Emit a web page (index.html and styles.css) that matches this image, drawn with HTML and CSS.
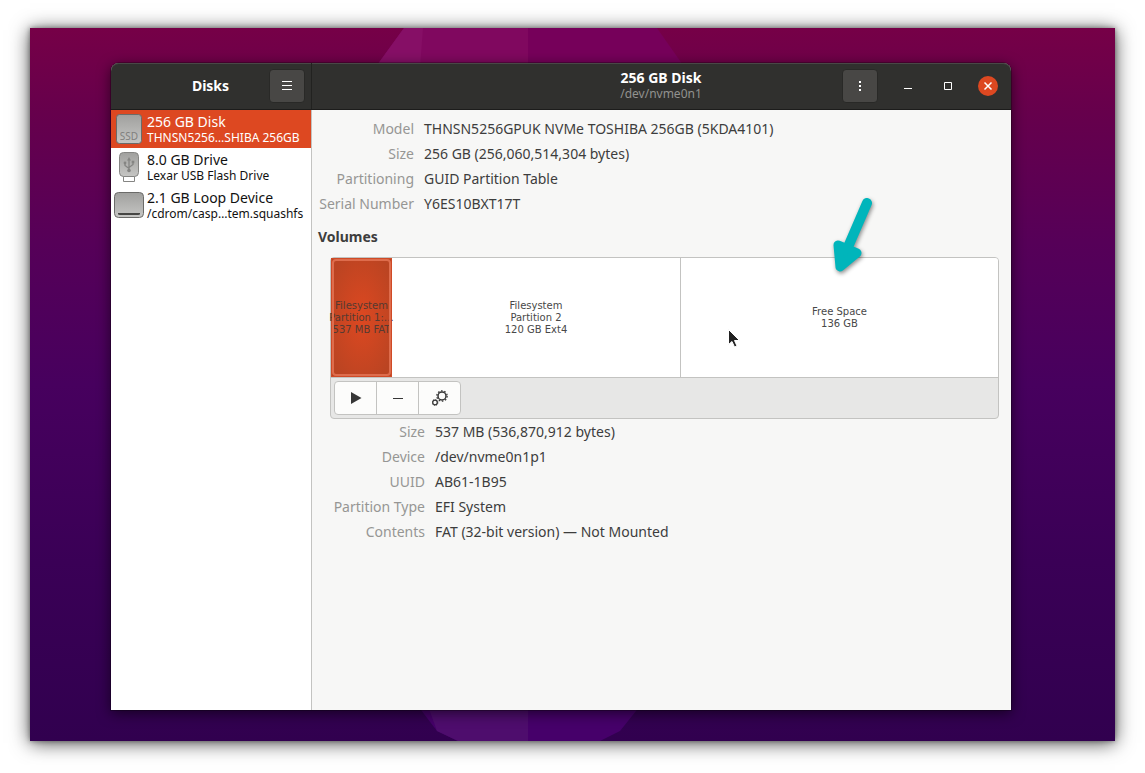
FILE: index.html
```html
<!DOCTYPE html>
<html lang="en">
<head>
<meta charset="utf-8">
<title>Disks</title>
<link rel="stylesheet" href="styles.css">
</head>
<body>
<div class="desktop">
  <svg class="wallpaper" viewBox="0 0 1085 713" preserveAspectRatio="none" aria-hidden="true">
    <defs>
      <linearGradient id="sky" x1="0" y1="0" x2="0" y2="1">
        <stop offset="0" stop-color="#760047"/>
        <stop offset="0.12" stop-color="#66004c"/>
        <stop offset="0.3" stop-color="#560058"/>
        <stop offset="0.5" stop-color="#47005e"/>
        <stop offset="0.75" stop-color="#3a0056"/>
        <stop offset="1" stop-color="#31004f"/>
      </linearGradient>
    </defs>
    <rect width="1085" height="713" fill="url(#sky)"/>
    <path d="M374 0H627L655 40H345Z" fill="#76005a"/>
    <path d="M374 0H498V40H345Z" fill="#80085f"/>
    <path d="M374 0H393L390 40H345Z" fill="#860f66"/>
    <path d="M388 678H610L590 703L570 713H428L407 703Z" fill="#46006a"/>
    <path d="M398 678H498V713H428L407 703Z" fill="#4e0d6d"/>
  </svg>
  <main class="window">
    <header class="titlebar">
      <div class="title-left">
        <h1 class="app-name">Disks</h1>
        <button class="bar-button" aria-label="Main menu">
          <svg width="16" height="16" viewBox="0 0 16 16"><path d="M3 3.5H13M3 7.5H13M3 11.5H13" stroke="#fff"/></svg>
        </button>
      </div>
      <div class="title-right">
        <div class="heading">
          <h2 class="disk-name">256 GB Disk</h2>
          <p class="disk-path">/dev/nvme0n1</p>
        </div>
        <div class="controls">
          <button class="bar-button" aria-label="Drive options">
            <svg width="16" height="16" viewBox="0 0 16 16"><path d="M7 3h2v2H7zM7 7h2v2H7zM7 11h2v2H7z" fill="#fff"/></svg>
          </button>
          <button class="win-button" aria-label="Minimize">
            <svg width="20" height="20" viewBox="0 0 20 20"><path d="M6 12.5H14" stroke="#fff"/></svg>
          </button>
          <button class="win-button" aria-label="Maximize">
            <svg width="20" height="20" viewBox="0 0 20 20"><path d="M6.5 6.5h7v7h-7z" fill="none" stroke="#fff"/></svg>
          </button>
          <button class="win-button close" aria-label="Close">
            <svg width="20" height="20" viewBox="0 0 20 20"><path d="M6.5 6.5L13.5 13.5M13.5 6.5L6.5 13.5" stroke="#fff" stroke-width="1.5"/></svg>
          </button>
        </div>
      </div>
    </header>
    <div class="body">
      <nav class="sidebar" aria-label="Drives">
        <button class="drive selected">
          <svg class="drive-icon" width="32" height="32" viewBox="0 0 32 32">
            <defs><linearGradient id="metal" x1="0" y1="0" x2="0" y2="1"><stop offset="0" stop-color="#a0a09e"/><stop offset="1" stop-color="#c6c6c4"/></linearGradient></defs>
            <rect x="3.5" y="1.5" width="25" height="29" rx="3" fill="url(#metal)" stroke="#6b6b69"/>
            <text class="ssd-text" x="16" y="27" text-anchor="middle">SSD</text>
          </svg>
          <span class="drive-text"><span class="drive-name">256 GB Disk</span><span class="drive-model">THNSN5256…SHIBA 256GB</span></span>
        </button>
        <button class="drive">
          <svg class="drive-icon" width="32" height="32" viewBox="0 0 32 32">
            <path d="M10.5 25.5h11v5h-11z" fill="#fff" stroke="#858583"/>
            <rect x="6.5" y="1.5" width="19" height="24" rx="4" fill="url(#metal)" stroke="#858583"/>
            <path d="M16 8V19M12 12V14.500L16 17.500M20 11V13.500L16 16.500" fill="none" stroke="#858583" stroke-width="1.3"/>
            <path d="M14 9.500L16 6L18 9.500Z" fill="#858583"/>
            <circle cx="16" cy="19.500" r="1.800" fill="#858583"/><circle cx="12" cy="12" r="1.400" fill="#858583"/><path d="M18.700 9.700h2.600v2.600h-2.600z" fill="#858583"/>
          </svg>
          <span class="drive-text"><span class="drive-name">8.0 GB Drive</span><span class="drive-model">Lexar USB Flash Drive</span></span>
        </button>
        <button class="drive">
          <svg class="drive-icon" width="32" height="32" viewBox="0 0 32 32">
            <rect x="1.5" y="3.5" width="29" height="25" rx="4" fill="url(#metal)" stroke="#6b6b69"/>
            <path d="M5 24h22v1q0 1-2 1H7q-2 0-2-1Z" fill="#464644"/>
          </svg>
          <span class="drive-text"><span class="drive-name">2.1 GB Loop Device</span><span class="drive-model">/cdrom/casp…tem.squashfs</span></span>
        </button>
      </nav>
      <section class="content">
        <dl class="details">
          <dt>Model</dt><dd>THNSN5256GPUK NVMe TOSHIBA 256GB (5KDA4101)</dd>
          <dt>Size</dt><dd>256 GB (256,060,514,304 bytes)</dd>
          <dt>Partitioning</dt><dd>GUID Partition Table</dd>
          <dt>Serial Number</dt><dd>Y6ES10BXT17T</dd>
        </dl>
        <h3 class="section-title">Volumes</h3>
        <div class="volumes">
          <div class="partitions">
            <button class="partition efi active"><span>Filesystem<br>Partition 1:…<br>537 MB FAT</span></button>
            <button class="partition root"><span>Filesystem<br>Partition 2<br>120 GB Ext4</span></button>
            <button class="partition free"><span>Free Space<br>136 GB</span></button>
            <svg class="pointer" width="14" height="22" viewBox="0 0 14 22" aria-hidden="true"><path d="M1.5 1.5V16.5L5 13.5L7.500 19L10 18L7.500 12.500H12.500Z" fill="#222" stroke="#fff"/></svg>
            <svg class="arrow" width="48" height="84" viewBox="0 0 48 84" aria-hidden="true"><path d="M37 10L18 54" stroke="#00b5bb" stroke-width="10" stroke-linecap="round"/><path d="M8 52L27 60L10 74Z" fill="#00b5bb" stroke="#00b5bb" stroke-width="9" stroke-linejoin="round"/></svg>
          </div>
          <div class="toolbar">
            <div class="tool-group">
              <button class="tool" aria-label="Mount partition"><svg width="16" height="16" viewBox="0 0 16 16"><path d="M3 2L13.500 8L3 14Z" fill="#363636"/></svg></button>
              <button class="tool" aria-label="Delete partition"><svg width="16" height="16" viewBox="0 0 16 16"><path d="M3 8.500H13" stroke="#363636"/></svg></button>
              <button class="tool" aria-label="Partition options"><svg width="16" height="16" viewBox="0 0 16 16" fill="none" stroke="#363636"><circle cx="10" cy="6" r="4" stroke-width="1.500"/><circle cx="10" cy="6" r="5.200" stroke-width="1.200" stroke-dasharray="1.600 1.670"/><circle cx="3" cy="12.500" r="2.300" stroke-width="1.300"/><circle cx="3" cy="12.500" r="3" stroke-width=".8" stroke-dasharray="1.100 1.250"/></svg></button>
            </div>
          </div>
        </div>
        <dl class="details volume-details">
          <dt>Size</dt><dd>537 MB (536,870,912 bytes)</dd>
          <dt>Device</dt><dd>/dev/nvme0n1p1</dd>
          <dt>UUID</dt><dd>AB61-1B95</dd>
          <dt>Partition Type</dt><dd>EFI System</dd>
          <dt>Contents</dt><dd>FAT (32-bit version) — Not Mounted</dd>
        </dl>
      </section>
    </div>
  </main>
</div>
</body>
</html>
```
FILE: styles.css
```css
* { box-sizing: border-box; }
body {
  margin: 0;
  min-height: 100vh;
  padding: 28px 30px 32px;
  display: flex;
  background: #fff;
  color: #3d3d3d;
  font: 14px/25px "Noto Sans", "Open Sans", sans-serif;
}
h1, h2, h3, p, dl, dd { margin: 0; }
button {
  margin: 0;
  padding: 0;
  border: 0;
  background: none;
  color: inherit;
  font: inherit;
}
svg { display: block; }

.desktop {
  position: relative;
  flex: 1;
  display: flex;
  padding: 35px 104px 31px 81px;
  background: #47005e;
  box-shadow: 0 2px 18px rgba(0, 0, 0, .7), 0 0 5px rgba(0, 0, 0, .4);
}
.wallpaper { position: absolute; inset: 0; width: 100%; height: 100%; }
.window {
  position: relative;
  flex: 1;
  display: flex;
  flex-direction: column;
  border-radius: 8px 8px 0 0;
  background: #f7f7f6;
  box-shadow: 0 3px 14px rgba(0, 0, 0, .6), 0 0 0 1px rgba(0, 0, 0, .25);
}

.titlebar {
  display: flex;
  height: 47px;
  border-radius: 8px 8px 0 0;
  border-bottom: 1px solid #1c1c1b;
  background: #30302e;
  box-shadow: inset 0 1px #484846;
  color: #fff;
}
.title-left {
  width: 201px;
  display: flex;
  align-items: center;
  padding-right: 6px;
  border-right: 1px solid #222220;
}
.app-name { flex: 1; padding-left: 41px; text-align: center; font-size: 14px; line-height: 20px; }
.title-right { flex: 1; display: grid; grid-template-columns: 1fr auto; align-items: center; padding-right: 13px; }
.heading { text-align: center; padding-left: 168px; }
.disk-name { font-size: 14px; line-height: 16px; }
.disk-path { color: #92928f; font-size: 12px; line-height: 16px; }
.controls { display: flex; align-items: center; gap: 20px; }
.bar-button {
  width: 36px;
  height: 34px;
  display: grid;
  place-items: center;
  border: 1px solid #292927;
  border-radius: 4px;
  background: #484745;
}
.win-button { width: 20px; height: 20px; border-radius: 50%; }
.close { background: #dd4821; }

.body { flex: 1; display: flex; }
.sidebar { width: 201px; border-right: 1px solid #c3c3c1; background: #fff; color: #111; }
.drive { width: 100%; height: 38px; display: flex; align-items: center; gap: 2px; padding-left: 2px; text-align: left; }
.drive.selected { background: #dd4821; color: #fff; }
.drive-icon { flex: none; }
.drive-text { display: flex; flex-direction: column; white-space: nowrap; }
.drive-name { font-size: 14px; line-height: 17px; }
.drive-model { font-size: 12px; line-height: 15px; }
.ssd-text { font: 10px "Noto Sans", sans-serif; fill: #80807e; }

.content { flex: 1; padding: 6px 12px 0 6px; }
.details { display: grid; grid-template-columns: 96px 1fr; column-gap: 10px; }
.details dt { text-align: right; color: #969694; white-space: nowrap; }
.section-title { margin: 9px 0 8px; font-size: 14px; line-height: 24px; }
.volumes { margin-left: 12px; border: 1px solid #c3c3c1; border-radius: 4px; background: #e7e7e6; }
.partitions { position: relative; display: flex; height: 120px; border-bottom: 1px solid #c3c3c1; border-radius: 3px 3px 0 0; background: #fff; }
.partition {
  flex-basis: 0;
  min-width: 0;
  display: grid;
  place-items: center;
  justify-content: center;
  font: 10px/12px "DejaVu Sans", sans-serif;
  color: #484848;
  white-space: nowrap;
}
.efi { flex-grow: 61; }
.root { flex-grow: 288; border-right: 1px solid #c3c3c1; }
.free { flex-grow: 317; }
.active {
  position: relative;
  background: radial-gradient(ellipse 60% 60%, #dd4821, #ba4422);
  box-shadow: inset 0 0 0 1px #cf4a26;
  color: #553a31;
}
.active::before { content: ""; position: absolute; inset: 1px; border: 2px solid #de6c4c; border-radius: 4px; }
.pointer { position: absolute; left: 396px; top: 70px; }
.arrow { position: absolute; left: 78%; top: -65px; margin-left: -21px; filter: drop-shadow(1px 2px 2px rgba(0, 0, 0, .45)); }
.toolbar { padding: 3px; height: 40px; }
.tool-group { display: inline-flex; border: 1px solid #c3c3c1; border-radius: 4px; background: #fcfcfb; }
.tool { width: 41px; height: 32px; display: grid; place-items: center; }
.tool + .tool { width: 42px; border-left: 1px solid #c3c3c1; }
.volume-details { grid-template-columns: 107px 1fr; }
```
